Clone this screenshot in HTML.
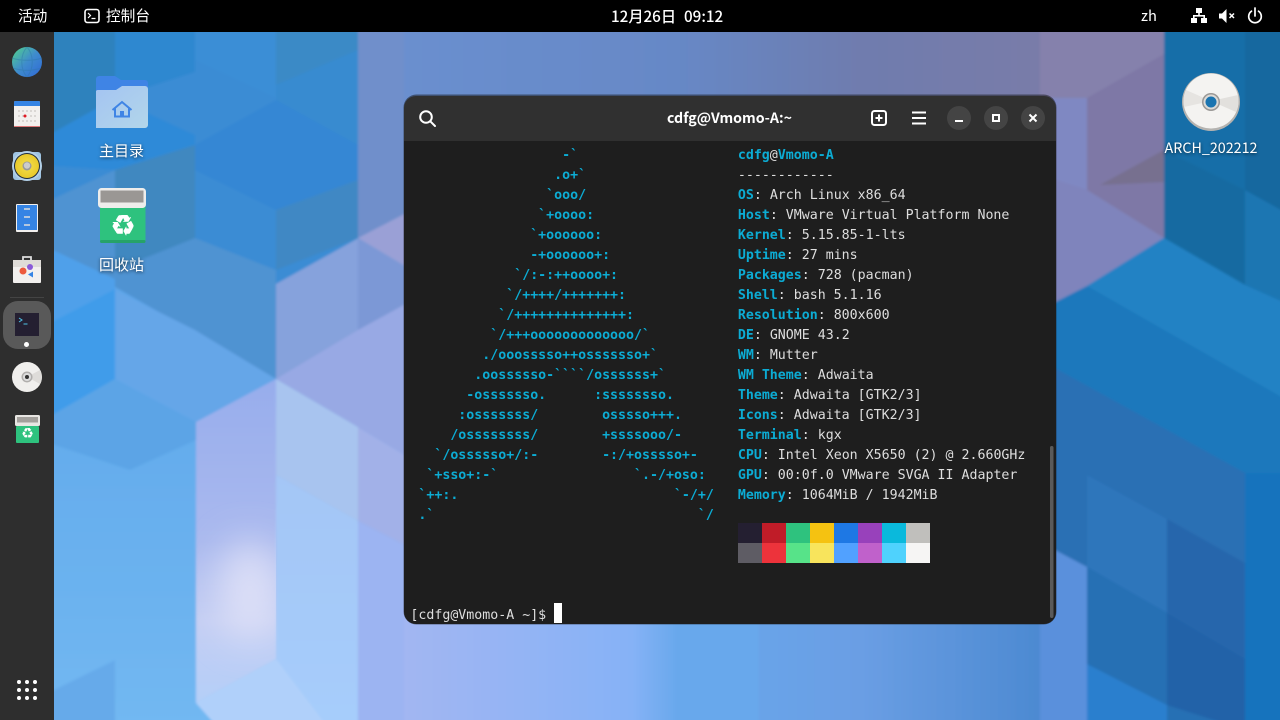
<!DOCTYPE html>
<html lang="zh"><head><meta charset="utf-8"><title>GNOME</title>
<style>
html,body{margin:0;padding:0;width:1280px;height:720px;overflow:hidden;background:#000}
body{position:relative;font-family:"Liberation Sans","Noto Sans CJK SC",sans-serif}
.a{position:absolute;white-space:nowrap}
.ui{font-family:"Noto Sans CJK SC","Liberation Sans",sans-serif;color:#fff;font-size:14.67px;line-height:20px}
.lab{font-family:"Noto Sans CJK SC","Liberation Sans",sans-serif;color:#fff;font-size:15px;line-height:20px;text-shadow:0 1px 3px rgba(0,0,0,.65);transform:translateX(-50%)}
#term{position:absolute;left:410.400px;top:146px;margin:0;font-family:"DejaVu Sans Mono","Liberation Mono",monospace;font-size:13.280px;line-height:20px;color:#dedede;white-space:pre}
#term b{color:#0cacd4;font-weight:700}
svg{position:absolute;left:0;top:0}
</style></head><body>

<svg width="1280" height="720" viewBox="0 0 1280 720">
<defs>
<filter id="soft" x="0" y="0" width="100%" height="100%"><feGaussianBlur stdDeviation="1.300"/></filter>
<filter id="glow" x="-80%" y="-80%" width="260%" height="260%"><feGaussianBlur stdDeviation="18"/></filter>
<clipPath id="pc"><polygon points="196,422 276,379 276,659 196,703"/></clipPath>
<linearGradient id="lv" x1="0" y1="0" x2="0" y2="1"><stop offset="0" stop-color="#5ba4e8"/><stop offset="1" stop-color="#72b8f2"/></linearGradient>
<linearGradient id="pu" x1="0" y1="0" x2="0" y2="1"><stop offset="0" stop-color="#97adec"/><stop offset=".5" stop-color="#aab9ee"/><stop offset=".75" stop-color="#c4cef3"/><stop offset="1" stop-color="#b4cff8"/></linearGradient>
<linearGradient id="lb" x1="0" y1="0" x2="0" y2="1"><stop offset="0" stop-color="#a4c6f6"/><stop offset="1" stop-color="#a6cdfb"/></linearGradient>
<linearGradient id="top" x1="0" y1="0" x2="1" y2="0"><stop offset="0" stop-color="#6a8fcf"/><stop offset=".42" stop-color="#6688c6"/><stop offset=".7" stop-color="#6f7cae"/><stop offset="1" stop-color="#7a7ca8"/></linearGradient>
<linearGradient id="bot" x1="0" y1="0" x2="1" y2="0"><stop offset="0" stop-color="#a2b6f2"/><stop offset=".35" stop-color="#86b2f6"/><stop offset=".42" stop-color="#68a8ec"/><stop offset=".7" stop-color="#6a9ee4"/><stop offset="1" stop-color="#4a88d0"/></linearGradient>
<linearGradient id="gl" x1="0" y1="0" x2="1" y2="1"><stop offset="0" stop-color="#52d48a"/><stop offset=".5" stop-color="#3f8ccc"/><stop offset="1" stop-color="#2f68d8"/></linearGradient>
<linearGradient id="fo" x1="0" y1="0" x2="1" y2="1"><stop offset="0" stop-color="#a4c4f2"/><stop offset="1" stop-color="#b2d6ea"/></linearGradient>
<radialGradient id="sp"><stop offset="0" stop-color="#f4e04c"/><stop offset="1" stop-color="#e8c92a"/></radialGradient>
</defs>

<g filter="url(#soft)">
<rect x="0" y="0" width="1280" height="720" fill="#3b8cd4"/>
<polygon points="40,20 115,20 115,98 40,140" fill="#2f82bd"/>
<polygon points="115,20 195,20 195,72 115,98" fill="#2f88d0"/>
<polygon points="195,20 276,20 276,98 195,60" fill="#3a8ed6"/>
<polygon points="276,20 358,20 358,50 276,85" fill="#3b8ac6"/>
<polygon points="276,85 358,50 358,145 276,100" fill="#378bd0"/>
<polygon points="40,140 115,98 195,135 195,150 115,170 40,165" fill="#2f8ad8"/>
<polygon points="115,170 195,145 195,238 115,270" fill="#4188c0"/>
<polygon points="195,145 276,100 358,145 358,180 276,210 195,170" fill="#3487d4"/>
<polygon points="276,210 358,180 358,238 276,270" fill="#3f88c4"/>
<polygon points="40,244 40,205 115,170 115,270 195,238 276,270 276,284 358,238 358,330 276,379" fill="#4f93d2"/>
<polygon points="40,244 276,379 358,427 420,464 420,730 40,730" fill="url(#lv)"/>
<polygon points="115,290 195,330 276,379 196,422 115,379" fill="#65a6e8"/>
<polygon points="40,328 115,289 115,379 40,422" fill="#3f9cea"/>
<polygon points="40,244 115,279 115,289 40,328" fill="#4fa0ea"/>
<polygon points="40,422 115,379 196,422 196,440 130,470 40,440" fill="#5ca4e6"/>
<polygon points="40,697 115,660 115,730 40,730" fill="#66aaea"/>
<polygon points="276,284 420,204 420,304 276,379" fill="#86a2dc"/>
<polygon points="358,20 420,20 420,206 358,238" fill="#6f8fcb"/>
<polygon points="358,238 420,206 420,275" fill="#9aa0d6"/>
<polygon points="358,238 420,275 420,304 358,330" fill="#7c98d6"/>
<polygon points="196,422 276,379 276,659 196,703" fill="url(#pu)"/>
<polygon points="196,703 276,659 358,700 358,730 220,730" fill="#b0d0fa"/>
<polygon points="276,379 358,330 420,296 420,464 358,427" fill="#98a9e4"/>
<polygon points="276,379 358,427 358,521 276,475" fill="#a8c4ef"/>
<polygon points="276,475 358,521 358,730 330,730 276,659" fill="url(#lb)"/>
<polygon points="358,427 420,464 420,553 358,521" fill="#a2b1e8"/>
<polygon points="358,521 420,553 420,730 358,730" fill="#9cb4f2"/>

<rect x="404" y="20" width="652" height="90" fill="url(#top)"/>
<rect x="404" y="610" width="652" height="120" fill="url(#bot)"/>
<polygon points="680,620 758,620 758,730 680,730" fill="#68a8ec"/>

<rect x="1040" y="20" width="250" height="710" fill="#1a74b8"/>
<polygon points="1040,20 1164,20 1164,238 1040,310" fill="#8581ac"/>
<polygon points="1087,98 1164,54 1164,238 1087,190" fill="#7e78a6"/>
<polygon points="1040,98 1087,98 1087,190 1040,175" fill="#7f88c2"/>
<polygon points="1087,190 1164,238 1087,286 1040,310 1040,175" fill="#7f84bc"/>
<polygon points="1100,185 1164,150 1164,182" fill="#77708f"/>
<polygon points="1164,20 1290,20 1290,215 1164,150" fill="#176ea8"/>
<polygon points="1245,20 1290,20 1290,215 1245,190" fill="#16679f"/>
<polygon points="1164,150 1245,190 1245,285 1164,238" fill="#196ba1"/>
<polygon points="1245,190 1290,215 1290,305 1245,285" fill="#1b76b2"/>
<polygon points="1164,238 1245,285 1290,305 1290,402 1087,286" fill="#2282c4"/>
<polygon points="1040,310 1087,286 1290,402 1290,480 1245,473 1040,360" fill="#1c78bc"/>
<polygon points="1040,360 1245,473 1245,659 1167,613 1087,567 1040,542" fill="#2c70b4"/>
<polygon points="1087,475 1167,519 1167,613 1087,567" fill="#2e76bb"/>
<polygon points="1167,519 1245,563 1245,659 1167,613" fill="#2666ac"/>
<polygon points="1087,567 1167,613 1245,659 1245,730 1167,730 1087,664" fill="#2770b4"/>
<polygon points="1167,613 1245,659 1245,730 1167,705" fill="#2162a8"/>
<polygon points="1087,664 1167,705 1167,730 1087,730" fill="#2a7fce"/>
<polygon points="1040,542 1087,567 1087,730 1040,730" fill="#5a90dc"/>
<rect x="1245" y="473" width="45" height="257" fill="#1673bd"/>
</g>
<g clip-path="url(#pc)"><ellipse cx="250" cy="590" rx="32" ry="50" fill="#e6e6f8" fill-opacity=".75" filter="url(#glow)"/></g>

<!-- window -->
<rect x="403.500" y="94.500" width="653" height="530" rx="13" fill="#111" fill-opacity=".5"/>
<path d="M404 108a12 12 0 0 1 12-12h628a12 12 0 0 1 12 12v33H404z" fill="#303030"/>
<path d="M404 141h652v471a12 12 0 0 1-12 12H416a12 12 0 0 1-12-12z" fill="#1e1e1e"/>
<rect x="1050" y="446" width="3.500" height="172" rx="1.700" fill="#5a5a5a"/>
<g fill="none" stroke="#fff" stroke-width="2">
<circle cx="426" cy="117" r="5.800"/><path d="M430.300 121.300l4.700 4.700" stroke-linecap="round"/>
<rect x="872" y="111" width="14" height="14" rx="2.500"/><path d="M879 114.500v7M875.500 118h7"/>
<path d="M912 112.500h14M912 118h14M912 123.500h14"/>
</g>
<circle cx="959" cy="118" r="12" fill="#444"/><circle cx="996" cy="118" r="12" fill="#444"/><circle cx="1033" cy="118" r="12" fill="#444"/>
<path d="M955 121h8" stroke="#fff" stroke-width="2"/>
<rect x="993" y="115" width="6" height="6" fill="none" stroke="#fff" stroke-width="2"/>
<path d="M1029.500 114.500l7 7M1036.500 114.500l-7 7" stroke="#fff" stroke-width="2"/>
<g shape-rendering="crispEdges">
<rect x="738" y="523" width="24" height="20" fill="#241f31"/><rect x="762" y="523" width="24" height="20" fill="#c01c28"/><rect x="786" y="523" width="24" height="20" fill="#2ec27e"/><rect x="810" y="523" width="24" height="20" fill="#f5c211"/><rect x="834" y="523" width="24" height="20" fill="#1e78e4"/><rect x="858" y="523" width="24" height="20" fill="#9841bb"/><rect x="882" y="523" width="24" height="20" fill="#0ab9dc"/><rect x="906" y="523" width="24" height="20" fill="#c0bfbc"/>
<rect x="738" y="543" width="24" height="20" fill="#5e5c64"/><rect x="762" y="543" width="24" height="20" fill="#ed333b"/><rect x="786" y="543" width="24" height="20" fill="#57e389"/><rect x="810" y="543" width="24" height="20" fill="#f8e45c"/><rect x="834" y="543" width="24" height="20" fill="#51a1ff"/><rect x="858" y="543" width="24" height="20" fill="#c061cb"/><rect x="882" y="543" width="24" height="20" fill="#4fd2fd"/><rect x="906" y="543" width="24" height="20" fill="#f6f5f4"/>
<rect x="554" y="603" width="8" height="20" fill="#fff"/>
</g>

<!-- top bar + dock -->
<rect x="0" y="32" width="54" height="688" fill="#2e2e2e"/>
<rect x="0" y="0" width="1280" height="32" fill="#000"/>
<rect x="85" y="9.500" width="14" height="13" rx="2.500" fill="none" stroke="#fff" stroke-width="1.600"/>
<path d="M88 13l2.500 2.500L88 18M91.500 18.500h4" fill="none" stroke="#fff" stroke-width="1.200"/>
<g fill="#fff"><rect x="1196" y="8" width="6" height="5"/><rect x="1191" y="18" width="6" height="5"/><rect x="1201" y="18" width="6" height="5"/><rect x="1198.200" y="13" width="1.600" height="3"/><rect x="1193" y="15" width="12" height="1.600"/><rect x="1193" y="15" width="1.600" height="3"/><rect x="1203.400" y="15" width="1.600" height="3"/></g>
<path d="M1219 13.500h3l4.500-4.500v14l-4.500-4.500h-3z" fill="#fff"/>
<path d="M1229.500 13.500l4.500 4.500M1234 13.500l-4.500 4.500" stroke="#fff" stroke-width="1.500"/>
<path d="M1251.500 11.200a6.300 6.300 0 1 0 7 0M1255 8v8" fill="none" stroke="#fff" stroke-width="1.700" stroke-linecap="round"/>

<circle cx="27" cy="62" r="15" fill="url(#gl)"/>
<path d="M12 58c8 3 22 3 30 0M13 68c8 3 20 3 28 0M27 47c-7 8-7 22 0 30M27 47c7 8 7 22 0 30" fill="none" stroke="#2e78a8" stroke-opacity=".45"/>
<rect x="14" y="101" width="26" height="26" rx="1.500" fill="#f2f0ee"/><path d="M14 102.500a1.500 1.500 0 0 1 1.500-1.500h23a1.500 1.500 0 0 1 1.500 1.500V106H14z" fill="#3584e4"/><rect x="14" y="126" width="26" height="1" fill="#d77"/>
<g fill="#c9c5c2"><circle cx="19" cy="111" r=".9"/><circle cx="23" cy="111" r=".9"/><circle cx="27" cy="111" r=".9"/><circle cx="31" cy="111" r=".9"/><circle cx="35" cy="111" r=".9"/><circle cx="19" cy="116" r=".9"/><circle cx="23" cy="116" r=".9"/><circle cx="31" cy="116" r=".9"/><circle cx="35" cy="116" r=".9"/><circle cx="19" cy="121" r=".9"/><circle cx="23" cy="121" r=".9"/><circle cx="27" cy="121" r=".9"/><circle cx="31" cy="121" r=".9"/><circle cx="35" cy="121" r=".9"/></g><circle cx="25" cy="116" r="1.500" fill="#e01b24"/>
<rect x="13" y="152" width="28" height="28" rx="3" fill="#9fc4e2"/><circle cx="27" cy="166" r="15" fill="#b3d0e8"/><circle cx="27" cy="166" r="13" fill="#1d2a3a"/><circle cx="27" cy="166" r="12" fill="url(#sp)"/><circle cx="27" cy="166" r="4.500" fill="#999"/><circle cx="27" cy="165.500" r="3.200" fill="#ccc"/>
<rect x="16" y="204" width="22" height="28" rx="1" fill="#f2f0ee"/><rect x="17" y="205" width="20" height="25" fill="#3584e4"/><path d="M24 209h6M24 217h6M24 225h6" stroke="#ddd" stroke-width="1.500"/>
<path d="M23 261v-4h8v4" fill="none" stroke="#ddd" stroke-width="1.800"/><rect x="13" y="260" width="28" height="23" rx="1" fill="#f2f0ee"/><rect x="13" y="260" width="28" height="7" fill="#dfdcd8"/><circle cx="23" cy="271" r="3.500" fill="#ed5a3c"/><circle cx="30" cy="267" r="3" fill="#8a5ad8"/><path d="M33 271.500v6l-5-3z" fill="#3584e4"/>
<rect x="10" y="297" width="34" height="1" fill="#444"/>
<rect x="3" y="301" width="48" height="48" rx="15" fill="#595959"/>
<rect x="15" y="313" width="24" height="23" fill="#241f31"/>
<path d="M19 318l3 2-3 2" fill="none" stroke="#4fc3e8" stroke-width="1"/><path d="M23.500 324h4" stroke="#4fc3e8" stroke-width="1"/>
<circle cx="26.500" cy="344.500" r="2.500" fill="#fff"/>
<circle cx="27" cy="377" r="15" fill="#f0efed"/><path d="M27 377L40 370a15 15 0 0 1 0 14z" fill="#dedcd9"/><circle cx="27" cy="377" r="5.500" fill="#b0aeac"/><circle cx="27" cy="377" r="4" fill="#ddd"/><circle cx="27" cy="377" r="2" fill="#333"/>
<rect x="16" y="426" width="23" height="17" rx="1" fill="#2ec27e"/><rect x="15" y="415" width="25" height="11" rx="1.500" fill="#e8e6e3"/><rect x="17" y="417" width="21" height="5.500" fill="#a3a09c"/>
<g fill="#fff"><circle cx="19" cy="682" r="2"/><circle cx="27" cy="682" r="2"/><circle cx="35" cy="682" r="2"/><circle cx="19" cy="690" r="2"/><circle cx="27" cy="690" r="2"/><circle cx="35" cy="690" r="2"/><circle cx="19" cy="698" r="2"/><circle cx="27" cy="698" r="2"/><circle cx="35" cy="698" r="2"/></g>

<path d="M96 128V79a3 3 0 0 1 3-3h16l6 4h24a3 3 0 0 1 3 3v20H96z" fill="#3f84e5"/>
<path d="M96 128V91a2 2 0 0 1 2-1h18l6-4h23a3 3 0 0 1 3 3v36a3 3 0 0 1-3 3z" fill="url(#fo)"/>
<path d="M112.500 110l9.500-8 9.500 8M115 108.500V116.500h14V108.500" fill="none" stroke="#3f84e5" stroke-width="2"/><rect x="120" y="111" width="4" height="6" fill="#3f84e5"/>
<rect x="100" y="204" width="45.500" height="39" rx="3" fill="#2ec27e"/><rect x="100" y="240" width="45.500" height="3" rx="1.500" fill="#26a269"/>
<rect x="98" y="188" width="48" height="20" rx="3.500" fill="#eeedeb"/><rect x="100.500" y="190.500" width="43" height="12" fill="#9a9794"/>
<circle cx="1211" cy="102" r="29" fill="#b5b3b0"/><circle cx="1211" cy="101" r="27.500" fill="#f4f3f1"/>
<path d="M1211 101l27 -6a27.500 27.500 0 0 1 -2 17z" fill="#e2e0dd"/><path d="M1211 101l-27 6a27.500 27.500 0 0 1 2 -17z" fill="#e6e4e1"/>
<circle cx="1211" cy="102" r="9" fill="#9a9896"/><circle cx="1211" cy="102" r="7.500" fill="#dcdad7"/><circle cx="1211" cy="102" r="5.500" fill="#1a74b0"/>
</svg>

<div class="a ui" style="left:18px;top:6px">活动</div>
<div class="a ui" style="left:106px;top:6px">控制台</div>
<div class="a ui" style="left:611px;top:6px;font-weight:500;font-size:15.200px">12月26日</div>
<div class="a ui" style="left:684px;top:6px;font-weight:500;font-size:15.200px">09:12</div>
<div class="a ui" style="left:1141px;top:6px">zh</div>
<div class="a ui" style="left:667px;top:108px;font-weight:700;font-size:14.200px">cdfg@Vmomo-A:~</div>
<div class="a lab" style="left:121.500px;top:141px">主目录</div>
<div class="a lab" style="left:121.500px;top:255px">回收站</div>
<div class="a lab" style="left:1211px;top:138px;font-size:14.300px">ARCH_202212</div>
<div class="a" style="left:105px;top:211px;width:36px;text-align:center;font:700 28px/30px 'DejaVu Sans',sans-serif;color:#fff;-webkit-text-stroke:.6px #fff">♻</div>
<div class="a" style="left:17px;top:425px;width:21px;text-align:center;font:700 14px/18px 'DejaVu Sans',sans-serif;color:#fff">♻</div>

<pre id="term"><b>                   -&#96;</b>                    <b>cdfg</b>@<b>Vmomo-A</b>
<b>                  .o+&#96;</b>                   ------------
<b>                 &#96;ooo/</b>                   <b>OS</b>: Arch Linux x86_64
<b>                &#96;+oooo:</b>                  <b>Host</b>: VMware Virtual Platform None
<b>               &#96;+oooooo:</b>                 <b>Kernel</b>: 5.15.85-1-lts
<b>               -+oooooo+:</b>                <b>Uptime</b>: 27 mins
<b>             &#96;/:-:++oooo+:</b>               <b>Packages</b>: 728 (pacman)
<b>            &#96;/++++/+++++++:</b>              <b>Shell</b>: bash 5.1.16
<b>           &#96;/++++++++++++++:</b>             <b>Resolution</b>: 800x600
<b>          &#96;/+++ooooooooooooo/&#96;</b>           <b>DE</b>: GNOME 43.2
<b>         ./ooosssso++osssssso+&#96;</b>          <b>WM</b>: Mutter
<b>        .oossssso-&#96;&#96;&#96;&#96;/ossssss+&#96;</b>         <b>WM Theme</b>: Adwaita
<b>       -osssssso.      :ssssssso.</b>        <b>Theme</b>: Adwaita [GTK2/3]
<b>      :osssssss/        osssso+++.</b>       <b>Icons</b>: Adwaita [GTK2/3]
<b>     /ossssssss/        +ssssooo/-</b>       <b>Terminal</b>: kgx
<b>   &#96;/ossssso+/:-        -:/+osssso+-</b>     <b>CPU</b>: Intel Xeon X5650 (2) @ 2.660GHz
<b>  &#96;+sso+:-&#96;                 &#96;.-/+oso:</b>    <b>GPU</b>: 00:0f.0 VMware SVGA II Adapter
<b> &#96;++:.                           &#96;-/+/</b>   <b>Memory</b>: 1064MiB / 1942MiB
<b> .&#96;                                 &#96;/</b>




[cdfg@Vmomo-A ~]$ </pre>
</body></html>
